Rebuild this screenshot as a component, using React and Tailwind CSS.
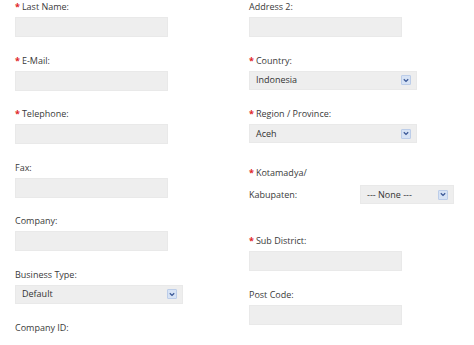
import React from "react";

const font = { fontFamily: '"Open Sans", "Liberation Sans", sans-serif' };

function Label({ children, required }) {
  return (
    <div className="h-[14px] leading-[14px] text-[9px] text-[#3a3a3a] whitespace-nowrap">
      {required && <span className="text-[#e0252b] font-bold mr-[2px]">*</span>}
      {children}
    </div>
  );
}

function TextInput() {
  return <div className="mt-[3px] h-[20px] w-[153px] bg-[#eeeeee] border border-[#e9e9e9]" />;
}

function Arrow() {
  return (
    <span className="w-[10px] h-[10px] bg-[#d7e3f5] border border-[#bccde9] rounded-[1px] flex items-center justify-center">
      <svg width="6" height="5" viewBox="0 0 6 5">
        <path d="M0.8 1.2 L3 3.4 L5.2 1.2" fill="none" stroke="#3a5796" strokeWidth="1.3" />
      </svg>
    </span>
  );
}

function Select({ value, width = "w-[168px]", className = "mt-[3px]" }) {
  return (
    <div className={`${className} h-[19px] ${width} bg-[#eeeeee] border border-[#e9e9e9] flex items-center justify-between pl-[6px] pr-[5px]`}>
      <span className="text-[9px] text-[#333]">{value}</span>
      <Arrow />
    </div>
  );
}

function Field({ label, required, children }) {
  return (
    <div className="h-[53.5px] shrink-0">
      <Label required={required}>{label}</Label>
      {children}
    </div>
  );
}

export default function App() {
  return (
    <div className="w-[474px] h-[345px] bg-white overflow-hidden flex items-start" style={font}>
      {/* left column */}
      <div className="ml-[15px] w-[234px] shrink-0 flex flex-col">
        <Field label="Last Name:" required><TextInput /></Field>
        <Field label="E-Mail:" required><TextInput /></Field>
        <Field label="Telephone:" required><TextInput /></Field>
        <Field label="Fax:"><TextInput /></Field>
        <Field label="Company:"><TextInput /></Field>
        <Field label="Business Type:"><Select value="Default" /></Field>
        <Field label="Company ID:" />
      </div>

      {/* right column */}
      <div className="flex-1 flex flex-col">
        <Field label="Address 2:"><TextInput /></Field>
        <Field label="Country:" required><Select value="Indonesia" /></Field>
        <Field label="Region / Province:" required><Select value="Aceh" /></Field>
        <div className="h-[73.5px] shrink-0 pt-[1.5px] flex items-start">
          <div className="w-[111px] text-[9px] leading-[22px] text-[#3a3a3a]">
            <span className="text-[#e0252b] font-bold mr-[2px]">*</span>Kotamadya/
            <br />
            Kabupaten:
          </div>
          <Select value="--- None ---" width="w-[94px]" className="mt-[23px]" />
        </div>
        <Field label="Sub District:" required><TextInput /></Field>
        <Field label="Post Code:"><TextInput /></Field>
      </div>
    </div>
  );
}
